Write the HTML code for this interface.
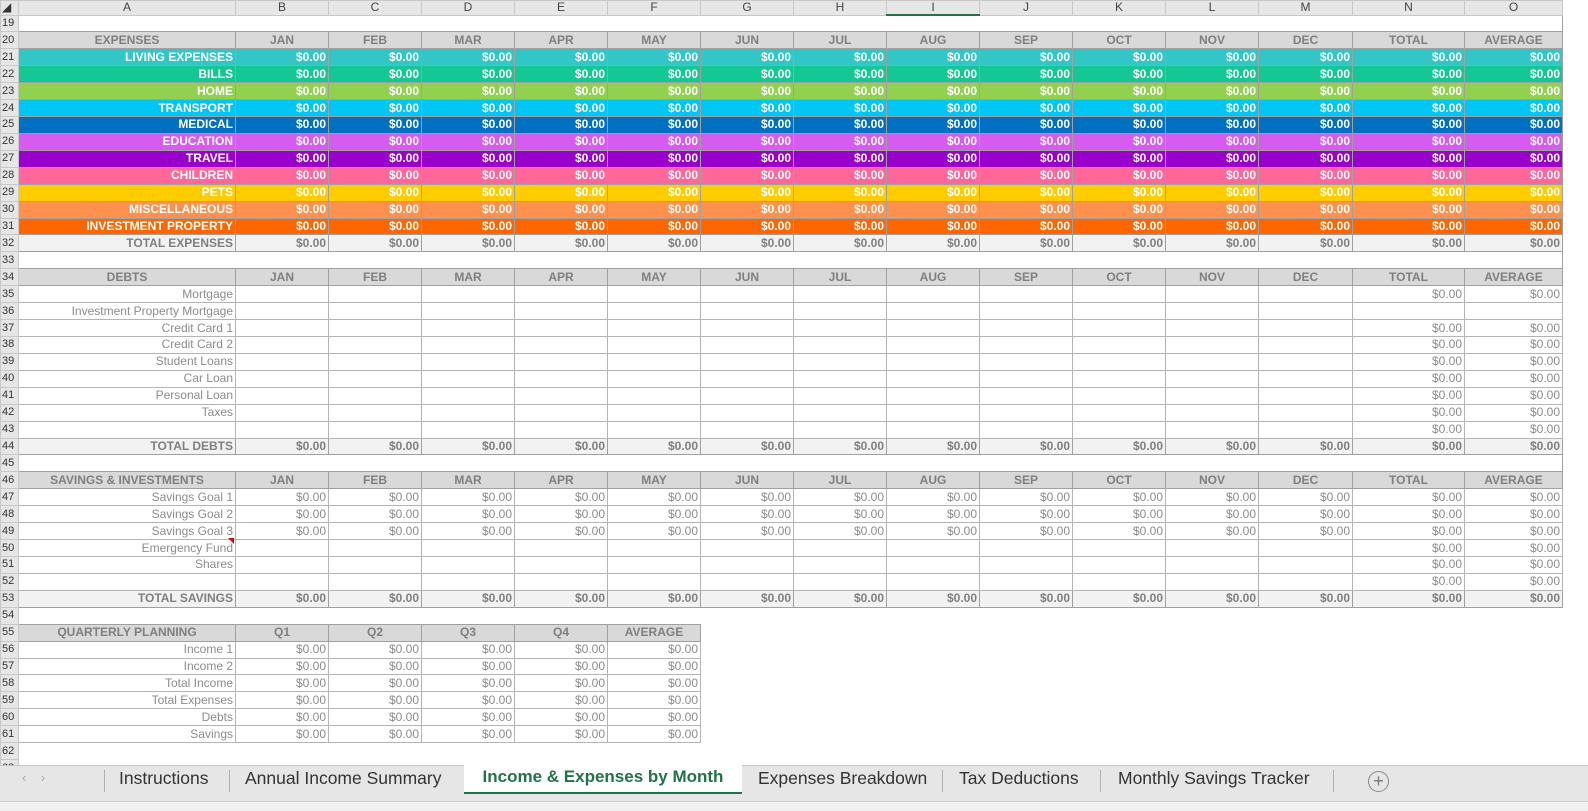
<!DOCTYPE html>
<html><head><meta charset="utf-8"><style>
body{margin:0;width:1588px;height:810px;overflow:hidden;background:#fff;font-family:"Liberation Sans",sans-serif;position:relative}
table{border-collapse:collapse;table-layout:fixed;position:absolute;top:0;left:0;width:1563px}
td{padding:0 2px;border:1px solid #a0a0a0;font:bold 12px "Liberation Sans",sans-serif;white-space:nowrap;overflow:hidden;text-align:right;color:#fff;line-height:15px}
tr{height:16.93px}
tr.L{height:14px}
tr.L td{background:#e6e6e6;color:#444;font-weight:normal;text-align:center;border-color:#c8c8c8;font-size:12px;line-height:13px}
td.n{background:#e6e6e6;color:#333;font-weight:normal;font-size:11px;text-align:left;padding:0 1px;border-color:#c8c8c8}
tr.h td{background:#d9d9d9;color:#7f7f7f;text-align:center}
tr.t td{background:#f2f2f2;color:#7f7f7f}
tr.d td{background:#fff;color:#8c8c8c;font-weight:normal;border-color:#b4b4b4}
tr.e td.x{border:none;border-right:1px solid #a0a0a0}
tr.q td.z{border:none}
tr td.n{background:#e6e6e6!important;color:#333!important;font-weight:normal!important;text-align:left!important;border-color:#c8c8c8!important}
.tabs{position:absolute;left:0;top:765px;width:1588px;height:36px;background:#e6e6e6;border-top:1px solid #c6c6c6}
.bot{position:absolute;left:0;top:801px;width:1588px;height:9px;background:#f0f0f0;border-top:1px solid #d0d0d0}
.tab{position:absolute;top:0;height:34px;line-height:24px;font-size:17.5px;color:#333;white-space:nowrap}
.sep{position:absolute;top:4px;width:1px;height:22px;background:#b0b0b0}
.mk{position:absolute;left:228px;top:538px;width:0;height:0;border-top:6px solid #e00;border-left:6px solid transparent}
</style></head><body>
<table>
<colgroup><col style="width:18px"><col style="width:217px"><col style="width:93px"><col style="width:93px"><col style="width:93px"><col style="width:93px"><col style="width:93px"><col style="width:93px"><col style="width:93px"><col style="width:93px"><col style="width:93px"><col style="width:93px"><col style="width:93px"><col style="width:94px"><col style="width:112px"><col style="width:98px"></colgroup>
<tr class="L"><td class="n" style="text-align:center">◢</td><td>A</td><td>B</td><td>C</td><td>D</td><td>E</td><td>F</td><td>G</td><td>H</td><td style="border-bottom:2px solid #217346">I</td><td>J</td><td>K</td><td>L</td><td>M</td><td>N</td><td>O</td></tr>
<tr class="e"><td class="n">19</td><td class="x" colspan="15"></td></tr>
<tr class="h"><td class="n">20</td><td>EXPENSES</td><td>JAN</td><td>FEB</td><td>MAR</td><td>APR</td><td>MAY</td><td>JUN</td><td>JUL</td><td>AUG</td><td>SEP</td><td>OCT</td><td>NOV</td><td>DEC</td><td>TOTAL</td><td>AVERAGE</td></tr>
<tr style="background:#33c6c6"><td class="n">21</td><td>LIVING EXPENSES</td><td>$0.00</td><td>$0.00</td><td>$0.00</td><td>$0.00</td><td>$0.00</td><td>$0.00</td><td>$0.00</td><td>$0.00</td><td>$0.00</td><td>$0.00</td><td>$0.00</td><td>$0.00</td><td>$0.00</td><td>$0.00</td></tr>
<tr style="background:#14c894"><td class="n">22</td><td>BILLS</td><td>$0.00</td><td>$0.00</td><td>$0.00</td><td>$0.00</td><td>$0.00</td><td>$0.00</td><td>$0.00</td><td>$0.00</td><td>$0.00</td><td>$0.00</td><td>$0.00</td><td>$0.00</td><td>$0.00</td><td>$0.00</td></tr>
<tr style="background:#92d050"><td class="n">23</td><td>HOME</td><td>$0.00</td><td>$0.00</td><td>$0.00</td><td>$0.00</td><td>$0.00</td><td>$0.00</td><td>$0.00</td><td>$0.00</td><td>$0.00</td><td>$0.00</td><td>$0.00</td><td>$0.00</td><td>$0.00</td><td>$0.00</td></tr>
<tr style="background:#00c6f5"><td class="n">24</td><td>TRANSPORT</td><td>$0.00</td><td>$0.00</td><td>$0.00</td><td>$0.00</td><td>$0.00</td><td>$0.00</td><td>$0.00</td><td>$0.00</td><td>$0.00</td><td>$0.00</td><td>$0.00</td><td>$0.00</td><td>$0.00</td><td>$0.00</td></tr>
<tr style="background:#0070c0"><td class="n">25</td><td>MEDICAL</td><td>$0.00</td><td>$0.00</td><td>$0.00</td><td>$0.00</td><td>$0.00</td><td>$0.00</td><td>$0.00</td><td>$0.00</td><td>$0.00</td><td>$0.00</td><td>$0.00</td><td>$0.00</td><td>$0.00</td><td>$0.00</td></tr>
<tr style="background:#d65cf0"><td class="n">26</td><td>EDUCATION</td><td>$0.00</td><td>$0.00</td><td>$0.00</td><td>$0.00</td><td>$0.00</td><td>$0.00</td><td>$0.00</td><td>$0.00</td><td>$0.00</td><td>$0.00</td><td>$0.00</td><td>$0.00</td><td>$0.00</td><td>$0.00</td></tr>
<tr style="background:#9900cc"><td class="n">27</td><td>TRAVEL</td><td>$0.00</td><td>$0.00</td><td>$0.00</td><td>$0.00</td><td>$0.00</td><td>$0.00</td><td>$0.00</td><td>$0.00</td><td>$0.00</td><td>$0.00</td><td>$0.00</td><td>$0.00</td><td>$0.00</td><td>$0.00</td></tr>
<tr style="background:#ff6699"><td class="n">28</td><td>CHILDREN</td><td>$0.00</td><td>$0.00</td><td>$0.00</td><td>$0.00</td><td>$0.00</td><td>$0.00</td><td>$0.00</td><td>$0.00</td><td>$0.00</td><td>$0.00</td><td>$0.00</td><td>$0.00</td><td>$0.00</td><td>$0.00</td></tr>
<tr style="background:#ffcc00"><td class="n">29</td><td>PETS</td><td>$0.00</td><td>$0.00</td><td>$0.00</td><td>$0.00</td><td>$0.00</td><td>$0.00</td><td>$0.00</td><td>$0.00</td><td>$0.00</td><td>$0.00</td><td>$0.00</td><td>$0.00</td><td>$0.00</td><td>$0.00</td></tr>
<tr style="background:#ff914d"><td class="n">30</td><td>MISCELLANEOUS</td><td>$0.00</td><td>$0.00</td><td>$0.00</td><td>$0.00</td><td>$0.00</td><td>$0.00</td><td>$0.00</td><td>$0.00</td><td>$0.00</td><td>$0.00</td><td>$0.00</td><td>$0.00</td><td>$0.00</td><td>$0.00</td></tr>
<tr style="background:#ff6600"><td class="n">31</td><td>INVESTMENT PROPERTY</td><td>$0.00</td><td>$0.00</td><td>$0.00</td><td>$0.00</td><td>$0.00</td><td>$0.00</td><td>$0.00</td><td>$0.00</td><td>$0.00</td><td>$0.00</td><td>$0.00</td><td>$0.00</td><td>$0.00</td><td>$0.00</td></tr>
<tr class="t"><td class="n">32</td><td>TOTAL EXPENSES</td><td>$0.00</td><td>$0.00</td><td>$0.00</td><td>$0.00</td><td>$0.00</td><td>$0.00</td><td>$0.00</td><td>$0.00</td><td>$0.00</td><td>$0.00</td><td>$0.00</td><td>$0.00</td><td>$0.00</td><td>$0.00</td></tr>
<tr class="e"><td class="n">33</td><td class="x" colspan="15"></td></tr>
<tr class="h"><td class="n">34</td><td>DEBTS</td><td>JAN</td><td>FEB</td><td>MAR</td><td>APR</td><td>MAY</td><td>JUN</td><td>JUL</td><td>AUG</td><td>SEP</td><td>OCT</td><td>NOV</td><td>DEC</td><td>TOTAL</td><td>AVERAGE</td></tr>
<tr class="d"><td class="n">35</td><td>Mortgage</td><td></td><td></td><td></td><td></td><td></td><td></td><td></td><td></td><td></td><td></td><td></td><td></td><td>$0.00</td><td>$0.00</td></tr>
<tr class="d"><td class="n">36</td><td>Investment Property Mortgage</td><td></td><td></td><td></td><td></td><td></td><td></td><td></td><td></td><td></td><td></td><td></td><td></td><td></td><td></td></tr>
<tr class="d"><td class="n">37</td><td>Credit Card 1</td><td></td><td></td><td></td><td></td><td></td><td></td><td></td><td></td><td></td><td></td><td></td><td></td><td>$0.00</td><td>$0.00</td></tr>
<tr class="d"><td class="n">38</td><td>Credit Card 2</td><td></td><td></td><td></td><td></td><td></td><td></td><td></td><td></td><td></td><td></td><td></td><td></td><td>$0.00</td><td>$0.00</td></tr>
<tr class="d"><td class="n">39</td><td>Student Loans</td><td></td><td></td><td></td><td></td><td></td><td></td><td></td><td></td><td></td><td></td><td></td><td></td><td>$0.00</td><td>$0.00</td></tr>
<tr class="d"><td class="n">40</td><td>Car Loan</td><td></td><td></td><td></td><td></td><td></td><td></td><td></td><td></td><td></td><td></td><td></td><td></td><td>$0.00</td><td>$0.00</td></tr>
<tr class="d"><td class="n">41</td><td>Personal Loan</td><td></td><td></td><td></td><td></td><td></td><td></td><td></td><td></td><td></td><td></td><td></td><td></td><td>$0.00</td><td>$0.00</td></tr>
<tr class="d"><td class="n">42</td><td>Taxes</td><td></td><td></td><td></td><td></td><td></td><td></td><td></td><td></td><td></td><td></td><td></td><td></td><td>$0.00</td><td>$0.00</td></tr>
<tr class="d"><td class="n">43</td><td></td><td></td><td></td><td></td><td></td><td></td><td></td><td></td><td></td><td></td><td></td><td></td><td></td><td>$0.00</td><td>$0.00</td></tr>
<tr class="t"><td class="n">44</td><td>TOTAL DEBTS</td><td>$0.00</td><td>$0.00</td><td>$0.00</td><td>$0.00</td><td>$0.00</td><td>$0.00</td><td>$0.00</td><td>$0.00</td><td>$0.00</td><td>$0.00</td><td>$0.00</td><td>$0.00</td><td>$0.00</td><td>$0.00</td></tr>
<tr class="e"><td class="n">45</td><td class="x" colspan="15"></td></tr>
<tr class="h"><td class="n">46</td><td>SAVINGS &amp; INVESTMENTS</td><td>JAN</td><td>FEB</td><td>MAR</td><td>APR</td><td>MAY</td><td>JUN</td><td>JUL</td><td>AUG</td><td>SEP</td><td>OCT</td><td>NOV</td><td>DEC</td><td>TOTAL</td><td>AVERAGE</td></tr>
<tr class="d"><td class="n">47</td><td>Savings Goal 1</td><td>$0.00</td><td>$0.00</td><td>$0.00</td><td>$0.00</td><td>$0.00</td><td>$0.00</td><td>$0.00</td><td>$0.00</td><td>$0.00</td><td>$0.00</td><td>$0.00</td><td>$0.00</td><td>$0.00</td><td>$0.00</td></tr>
<tr class="d"><td class="n">48</td><td>Savings Goal 2</td><td>$0.00</td><td>$0.00</td><td>$0.00</td><td>$0.00</td><td>$0.00</td><td>$0.00</td><td>$0.00</td><td>$0.00</td><td>$0.00</td><td>$0.00</td><td>$0.00</td><td>$0.00</td><td>$0.00</td><td>$0.00</td></tr>
<tr class="d"><td class="n">49</td><td>Savings Goal 3</td><td>$0.00</td><td>$0.00</td><td>$0.00</td><td>$0.00</td><td>$0.00</td><td>$0.00</td><td>$0.00</td><td>$0.00</td><td>$0.00</td><td>$0.00</td><td>$0.00</td><td>$0.00</td><td>$0.00</td><td>$0.00</td></tr>
<tr class="d"><td class="n">50</td><td>Emergency Fund</td><td></td><td></td><td></td><td></td><td></td><td></td><td></td><td></td><td></td><td></td><td></td><td></td><td>$0.00</td><td>$0.00</td></tr>
<tr class="d"><td class="n">51</td><td>Shares</td><td></td><td></td><td></td><td></td><td></td><td></td><td></td><td></td><td></td><td></td><td></td><td></td><td>$0.00</td><td>$0.00</td></tr>
<tr class="d"><td class="n">52</td><td></td><td></td><td></td><td></td><td></td><td></td><td></td><td></td><td></td><td></td><td></td><td></td><td></td><td>$0.00</td><td>$0.00</td></tr>
<tr class="t"><td class="n">53</td><td>TOTAL SAVINGS</td><td>$0.00</td><td>$0.00</td><td>$0.00</td><td>$0.00</td><td>$0.00</td><td>$0.00</td><td>$0.00</td><td>$0.00</td><td>$0.00</td><td>$0.00</td><td>$0.00</td><td>$0.00</td><td>$0.00</td><td>$0.00</td></tr>
<tr class="e"><td class="n">54</td><td class="x" colspan="15" style="border-right:none"></td></tr>
<tr class="h q"><td class="n">55</td><td>QUARTERLY PLANNING</td><td>Q1</td><td>Q2</td><td>Q3</td><td>Q4</td><td>AVERAGE</td><td class="z" colspan="9" style="background:#fff"></td></tr>
<tr class="d q"><td class="n">56</td><td>Income 1</td><td>$0.00</td><td>$0.00</td><td>$0.00</td><td>$0.00</td><td>$0.00</td><td class="z" colspan="9"></td></tr>
<tr class="d q"><td class="n">57</td><td>Income 2</td><td>$0.00</td><td>$0.00</td><td>$0.00</td><td>$0.00</td><td>$0.00</td><td class="z" colspan="9"></td></tr>
<tr class="d q"><td class="n">58</td><td>Total Income</td><td>$0.00</td><td>$0.00</td><td>$0.00</td><td>$0.00</td><td>$0.00</td><td class="z" colspan="9"></td></tr>
<tr class="d q"><td class="n">59</td><td>Total Expenses</td><td>$0.00</td><td>$0.00</td><td>$0.00</td><td>$0.00</td><td>$0.00</td><td class="z" colspan="9"></td></tr>
<tr class="d q"><td class="n">60</td><td>Debts</td><td>$0.00</td><td>$0.00</td><td>$0.00</td><td>$0.00</td><td>$0.00</td><td class="z" colspan="9"></td></tr>
<tr class="d q"><td class="n">61</td><td>Savings</td><td>$0.00</td><td>$0.00</td><td>$0.00</td><td>$0.00</td><td>$0.00</td><td class="z" colspan="9"></td></tr>
<tr class="e q"><td class="n">62</td><td class="z" colspan="15"></td></tr>
<tr class="e q"><td class="n">63</td><td class="z" colspan="15"></td></tr>
</table>
<div class="mk"></div>
<div class="tabs">
<div class="tab" style="left:22px;color:#aaa;font-size:13px">‹&nbsp;&nbsp;&nbsp;&nbsp;›</div>
<div class="sep" style="left:104px"></div>
<div class="tab" style="left:119px">Instructions</div>
<div class="sep" style="left:229px"></div>
<div class="tab" style="left:245px">Annual Income Summary</div>
<div class="tab" style="left:464px;width:278px;background:#fff;height:27px;border-bottom:2px solid #217346;top:-1px;color:#217346;font-weight:bold;text-align:center;font-size:17px">Income &amp; Expenses by Month</div>
<div class="tab" style="left:758px">Expenses Breakdown</div>
<div class="sep" style="left:942px"></div>
<div class="tab" style="left:959px">Tax Deductions</div>
<div class="sep" style="left:1100px"></div>
<div class="tab" style="left:1118px">Monthly Savings Tracker</div>
<div class="sep" style="left:1333px"></div>
<div style="position:absolute;left:1368px;top:5px;width:19px;height:19px;border:1.5px solid #888;border-radius:50%;color:#777;font-size:18px;line-height:18px;text-align:center">+</div>
</div>
<div class="bot"></div>
</body></html>
